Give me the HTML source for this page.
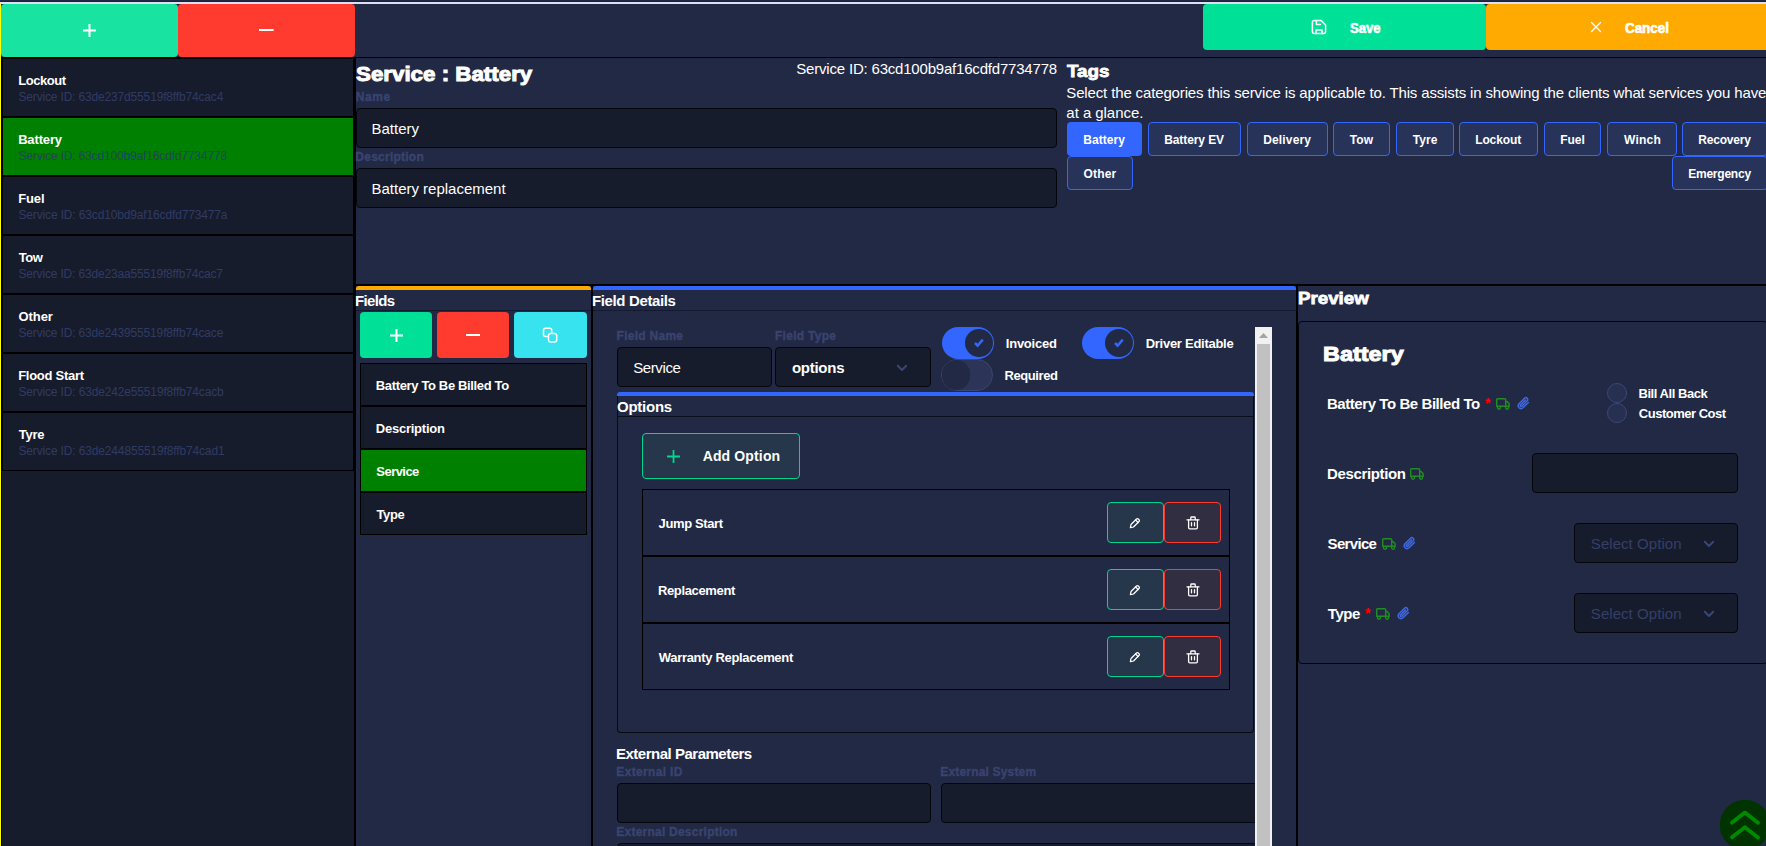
<!DOCTYPE html>
<html lang="en"><head><meta charset="utf-8"><title>Service Editor</title>
<style>
html,body{margin:0;padding:0;}
html{width:1766px;height:846px;overflow:hidden;background:#222944;}
body{width:1766px;height:846px;overflow:hidden;background:#222944;position:relative;font-family:"Liberation Sans", sans-serif;}
#app{position:absolute;left:0;top:0;width:1766px;height:846px;overflow:hidden;contain:paint;}
.b{position:absolute;box-sizing:border-box;display:block;}
.t{position:absolute;white-space:pre;line-height:1;}
</style></head><body><div id="app">
<div class="b" style="left:0px;top:0px;width:1766px;height:1px;background:#222944;"></div>
<div class="b" style="left:0px;top:1px;width:1766px;height:1px;background:#1a213e;"></div>
<div class="b" style="left:0px;top:2px;width:1766px;height:1px;background:#dfe1f0;"></div>
<div class="b" style="left:0px;top:3px;width:1766px;height:1px;background:#ffff00;"></div>
<div class="b" style="left:0px;top:4px;width:1px;height:842px;background:#ffff00;"></div>
<div class="b" style="left:1px;top:4px;width:177px;height:53px;background:#19e3a0;border-radius:4px;"></div>
<div class="b" style="left:178px;top:4px;width:177px;height:53px;background:#ff3b30;border-radius:4px;"></div>
<div class="b" style="left:1203px;top:4px;width:283px;height:46px;background:#00e096;border-radius:4px;"></div>
<div class="b" style="left:1486px;top:4px;width:290px;height:46px;background:#ffaa00;border-radius:4px;"></div>
<div class="b" style="left:1px;top:57px;width:1765px;height:1px;background:#000;"></div>
<div class="b" style="left:1px;top:57px;width:355px;height:789px;background:#000;"></div>
<div class="b" style="left:2px;top:58px;width:352px;height:788px;background:#171c2c;"></div>
<div class="b" style="left:2px;top:58px;width:352px;height:59px;background:#000;"></div>
<div class="b" style="left:3px;top:59px;width:350px;height:57px;background:#171c2c;"></div>
<div class="b" style="left:2px;top:117px;width:352px;height:59px;background:#000;"></div>
<div class="b" style="left:3px;top:118px;width:350px;height:57px;background:#008000;"></div>
<div class="b" style="left:2px;top:176px;width:352px;height:59px;background:#000;"></div>
<div class="b" style="left:3px;top:177px;width:350px;height:57px;background:#171c2c;"></div>
<div class="b" style="left:2px;top:235px;width:352px;height:59px;background:#000;"></div>
<div class="b" style="left:3px;top:236px;width:350px;height:57px;background:#171c2c;"></div>
<div class="b" style="left:2px;top:294px;width:352px;height:59px;background:#000;"></div>
<div class="b" style="left:3px;top:295px;width:350px;height:57px;background:#171c2c;"></div>
<div class="b" style="left:2px;top:353px;width:352px;height:59px;background:#000;"></div>
<div class="b" style="left:3px;top:354px;width:350px;height:57px;background:#171c2c;"></div>
<div class="b" style="left:2px;top:412px;width:352px;height:59px;background:#000;"></div>
<div class="b" style="left:3px;top:413px;width:350px;height:57px;background:#171c2c;"></div>
<div class="b" style="left:356px;top:108px;width:701px;height:40px;background:#171c2c;border:1px solid #05060c;border-radius:4px;"></div>
<div class="b" style="left:356px;top:168px;width:701px;height:40px;background:#171c2c;border:1px solid #05060c;border-radius:4px;"></div>
<div class="b" style="left:1067px;top:122px;width:75px;height:34px;background:#3366ff;border-radius:4px;"></div>
<div class="b" style="left:1148px;top:122px;width:93px;height:34px;background:#28335a;border:1px solid #3366ff;border-radius:4px;"></div>
<div class="b" style="left:1247px;top:122px;width:81px;height:34px;background:#28335a;border:1px solid #3366ff;border-radius:4px;"></div>
<div class="b" style="left:1333px;top:122px;width:57px;height:34px;background:#28335a;border:1px solid #3366ff;border-radius:4px;"></div>
<div class="b" style="left:1396px;top:122px;width:58px;height:34px;background:#28335a;border:1px solid #3366ff;border-radius:4px;"></div>
<div class="b" style="left:1459px;top:122px;width:79px;height:34px;background:#28335a;border:1px solid #3366ff;border-radius:4px;"></div>
<div class="b" style="left:1544px;top:122px;width:57px;height:34px;background:#28335a;border:1px solid #3366ff;border-radius:4px;"></div>
<div class="b" style="left:1607px;top:122px;width:70px;height:34px;background:#28335a;border:1px solid #3366ff;border-radius:4px;"></div>
<div class="b" style="left:1682px;top:122px;width:86px;height:34px;background:#28335a;border:1px solid #3366ff;border-radius:4px;"></div>
<div class="b" style="left:1067px;top:156px;width:66px;height:34px;background:#28335a;border:1px solid #3366ff;border-radius:4px;"></div>
<div class="b" style="left:1672px;top:156px;width:96px;height:34px;background:#28335a;border:1px solid #3366ff;border-radius:4px;"></div>
<div class="b" style="left:356px;top:284px;width:1410px;height:2px;background:#000;"></div>
<div class="b" style="left:356px;top:286px;width:235px;height:4px;background:#ffaa00;border-radius:3px 3px 0 0;"></div>
<div class="b" style="left:356px;top:310px;width:235px;height:1px;background:#151a30;"></div>
<div class="b" style="left:591px;top:286px;width:2px;height:560px;background:#000;"></div>
<div class="b" style="left:360px;top:312px;width:72px;height:46px;background:#00e096;border-radius:4px;"></div>
<div class="b" style="left:437px;top:312px;width:72px;height:46px;background:#ff3b30;border-radius:4px;"></div>
<div class="b" style="left:514px;top:312px;width:73px;height:46px;background:#36e3ee;border-radius:4px;"></div>
<div class="b" style="left:360px;top:363px;width:227px;height:43px;background:#000;"></div>
<div class="b" style="left:361px;top:364px;width:225px;height:41px;background:#171c2c;"></div>
<div class="b" style="left:360px;top:406px;width:227px;height:43px;background:#000;"></div>
<div class="b" style="left:361px;top:407px;width:225px;height:41px;background:#171c2c;"></div>
<div class="b" style="left:360px;top:449px;width:227px;height:43px;background:#000;"></div>
<div class="b" style="left:361px;top:450px;width:225px;height:41px;background:#008000;"></div>
<div class="b" style="left:360px;top:492px;width:227px;height:43px;background:#000;"></div>
<div class="b" style="left:361px;top:493px;width:225px;height:41px;background:#171c2c;"></div>
<div class="b" style="left:593px;top:286px;width:703px;height:4px;background:#3366ff;border-radius:3px 3px 0 0;"></div>
<div class="b" style="left:593px;top:310px;width:703px;height:1px;background:#151a30;"></div>
<div class="b" style="left:1296px;top:286px;width:2px;height:560px;background:#000;"></div>
<div class="b" style="left:617px;top:347px;width:155px;height:40px;background:#171c2c;border:1px solid #05060c;border-radius:4px;"></div>
<div class="b" style="left:775px;top:347px;width:156px;height:40px;background:#171c2c;border:1px solid #05060c;border-radius:4px;"></div>
<svg class="b" style="left:896.0px;top:364.0px" width="12" height="8" viewBox="-6 -4 12 8"><path d="M-4.2 -2.2L0 2L4.2 -2.2" fill="none" stroke="#3a4676" stroke-width="2" stroke-linecap="round" stroke-linejoin="round"/></svg>
<div class="b" style="left:942px;top:327px;width:52px;height:32px;background:#3366ff;border-radius:16px;"></div>
<div class="b" style="left:965px;top:329px;width:28px;height:28px;background:#222944;border-radius:14px;"></div>
<svg class="b" style="left:973.0px;top:337.0px" width="12" height="11" viewBox="0 0 12 11"><path d="M2 6L4.6 8.6L9.8 2.6" fill="none" stroke="#3366ff" stroke-width="2.5" stroke-linejoin="miter"/></svg>
<div class="b" style="left:1082px;top:327px;width:52px;height:32px;background:#3366ff;border-radius:16px;"></div>
<div class="b" style="left:1105px;top:329px;width:28px;height:28px;background:#222944;border-radius:14px;"></div>
<svg class="b" style="left:1113.0px;top:337.0px" width="12" height="11" viewBox="0 0 12 11"><path d="M2 6L4.6 8.6L9.8 2.6" fill="none" stroke="#3366ff" stroke-width="2.5" stroke-linejoin="miter"/></svg>
<div class="b" style="left:941px;top:359px;width:52px;height:32px;background:#2c3557;border:1px solid #3a4570;border-radius:16px;"></div>
<div class="b" style="left:942px;top:360px;width:28px;height:30px;background:#222944;border-radius:15px;"></div>
<div class="b" style="left:617px;top:392px;width:637px;height:341px;border:1px solid #070914;border-top:none;border-radius:4px;"></div>
<div class="b" style="left:617px;top:392px;width:637px;height:4px;background:#3366ff;border-radius:3px 3px 0 0;"></div>
<div class="b" style="left:618px;top:416px;width:635px;height:1px;background:#0b0e1c;"></div>
<div class="b" style="left:642px;top:433px;width:158px;height:46px;background:#26374b;border:1px solid #00d68f;border-radius:4px;"></div>
<svg class="b" style="left:665.6px;top:448.5px" width="15" height="15" viewBox="-7.5 -7.5 15 15"><path d="M-6.5 0H6.5M0 -6.5V6.5" stroke="#00d68f" stroke-width="1.8"/></svg>
<div class="b" style="left:642px;top:489px;width:588px;height:67px;border:1px solid #000;"></div>
<div class="b" style="left:1107px;top:502px;width:57px;height:41px;background:#26374b;border:1px solid #00d68f;border-radius:4px;"></div>
<div class="b" style="left:1164px;top:502px;width:57px;height:41px;background:#322e42;border:1px solid #ff3b30;border-radius:4px;"></div>
<svg class="b" style="left:1128.3px;top:515.6px" width="14" height="14" viewBox="-7 -7 14 14"><g fill="none" stroke="#fff" stroke-width="1.25" stroke-linejoin="round" stroke-linecap="round"><path d="M-4.6 4.6L-4 1.5L1.5 -4Q2.4 -4.9 3.3 -4L4 -3.3Q4.9 -2.4 4 -1.5L-1.5 4Z"/><path d="M0.5 -3.1L3.1 -0.5"/></g></svg>
<svg class="b" style="left:1184.5px;top:514.6px" width="16" height="16" viewBox="-8 -8 16 16"><g fill="none" stroke="#fff" stroke-width="1.3" stroke-linejoin="round" stroke-linecap="round"><path d="M-6 -3.2H6"/><path d="M-2.2 -3.2V-5.2Q-2.2 -6 -1.4 -6H1.4Q2.2 -6 2.2 -5.2V-3.2"/><path d="M-4.4 -3.2V4.6Q-4.4 5.8 -3.2 5.8H3.2Q4.4 5.8 4.4 4.6V-3.2"/><path d="M-1.5 -0.4V2.8M1.5 -0.4V2.8"/></g></svg>
<div class="b" style="left:642px;top:556px;width:588px;height:67px;border:1px solid #000;"></div>
<div class="b" style="left:1107px;top:569px;width:57px;height:41px;background:#26374b;border:1px solid #00d68f;border-radius:4px;"></div>
<div class="b" style="left:1164px;top:569px;width:57px;height:41px;background:#322e42;border:1px solid #ff3b30;border-radius:4px;"></div>
<svg class="b" style="left:1128.3px;top:582.6px" width="14" height="14" viewBox="-7 -7 14 14"><g fill="none" stroke="#fff" stroke-width="1.25" stroke-linejoin="round" stroke-linecap="round"><path d="M-4.6 4.6L-4 1.5L1.5 -4Q2.4 -4.9 3.3 -4L4 -3.3Q4.9 -2.4 4 -1.5L-1.5 4Z"/><path d="M0.5 -3.1L3.1 -0.5"/></g></svg>
<svg class="b" style="left:1184.5px;top:581.6px" width="16" height="16" viewBox="-8 -8 16 16"><g fill="none" stroke="#fff" stroke-width="1.3" stroke-linejoin="round" stroke-linecap="round"><path d="M-6 -3.2H6"/><path d="M-2.2 -3.2V-5.2Q-2.2 -6 -1.4 -6H1.4Q2.2 -6 2.2 -5.2V-3.2"/><path d="M-4.4 -3.2V4.6Q-4.4 5.8 -3.2 5.8H3.2Q4.4 5.8 4.4 4.6V-3.2"/><path d="M-1.5 -0.4V2.8M1.5 -0.4V2.8"/></g></svg>
<div class="b" style="left:642px;top:623px;width:588px;height:67px;border:1px solid #000;"></div>
<div class="b" style="left:1107px;top:636px;width:57px;height:41px;background:#26374b;border:1px solid #00d68f;border-radius:4px;"></div>
<div class="b" style="left:1164px;top:636px;width:57px;height:41px;background:#322e42;border:1px solid #ff3b30;border-radius:4px;"></div>
<svg class="b" style="left:1128.3px;top:649.6px" width="14" height="14" viewBox="-7 -7 14 14"><g fill="none" stroke="#fff" stroke-width="1.25" stroke-linejoin="round" stroke-linecap="round"><path d="M-4.6 4.6L-4 1.5L1.5 -4Q2.4 -4.9 3.3 -4L4 -3.3Q4.9 -2.4 4 -1.5L-1.5 4Z"/><path d="M0.5 -3.1L3.1 -0.5"/></g></svg>
<svg class="b" style="left:1184.5px;top:648.6px" width="16" height="16" viewBox="-8 -8 16 16"><g fill="none" stroke="#fff" stroke-width="1.3" stroke-linejoin="round" stroke-linecap="round"><path d="M-6 -3.2H6"/><path d="M-2.2 -3.2V-5.2Q-2.2 -6 -1.4 -6H1.4Q2.2 -6 2.2 -5.2V-3.2"/><path d="M-4.4 -3.2V4.6Q-4.4 5.8 -3.2 5.8H3.2Q4.4 5.8 4.4 4.6V-3.2"/><path d="M-1.5 -0.4V2.8M1.5 -0.4V2.8"/></g></svg>
<div class="b" style="left:617px;top:783px;width:314px;height:40px;background:#171c2c;border:1px solid #05060c;border-radius:4px;"></div>
<div class="b" style="left:941px;top:783px;width:317px;height:40px;background:#171c2c;border:1px solid #05060c;border-radius:4px;"></div>
<div class="b" style="left:617px;top:843px;width:641px;height:40px;background:#171c2c;border:1px solid #05060c;border-radius:4px;"></div>
<div class="b" style="left:1255px;top:327px;width:17px;height:519px;background:#f1f1f1;"></div>
<div class="b" style="left:1257px;top:344px;width:13px;height:502px;background:#c1c1c1;"></div>
<svg class="b" style="left:1259px;top:333px" width="9" height="5" viewBox="0 0 9 5"><path d="M0 5L4.5 0L9 5Z" fill="#a3a3a3"/></svg>
<div class="b" style="left:1298px;top:321px;width:470px;height:343px;border:1px solid #03040a;border-radius:4px;"></div>
<svg class="b" style="left:1496.0px;top:398.0px" width="15" height="13" viewBox="0 0 15 13"><g fill="none" stroke="#228b22" stroke-width="1.45" stroke-linejoin="round" stroke-linecap="round"><path d="M1.7 0.8H8.7Q9.7 0.8 9.7 1.8V8.2H0.7V1.8Q0.7 0.8 1.7 0.8Z"/><path d="M9.7 3.4H10.7L13.1 5.5V8.2H9.7"/><path d="M1.5 8.4V9.6Q1.5 11.2 3 11.2Q4.5 11.2 4.5 9.6V8.4"/><path d="M9.6 8.4V9.6Q9.6 11.2 11.1 11.2Q12.6 11.2 12.6 9.6V8.4"/></g></svg>
<svg class="b" style="left:1515.6px;top:396.0px" width="14" height="14" viewBox="0 0 14 14"><g fill="none" stroke="#4169e1" stroke-width="1.45" stroke-linecap="round" stroke-linejoin="round"><path d="M12.4 6.4L7 11.8Q5 13.6 3 11.8Q1.2 9.8 3 7.8L8.6 2.2Q9.9 1 11.2 2.2Q12.4 3.5 11.2 4.8L5.8 10.2Q5.1 10.8 4.5 10.2Q3.9 9.5 4.5 8.9L9.4 4"/></g></svg>
<div class="b" style="left:1607px;top:383px;width:20px;height:20px;background:#283052;border:1px solid #3a4878;border-radius:10px;"></div>
<div class="b" style="left:1607px;top:403px;width:20px;height:20px;background:#283052;border:1px solid #3a4878;border-radius:10px;"></div>
<svg class="b" style="left:1410.3px;top:468.0px" width="15" height="13" viewBox="0 0 15 13"><g fill="none" stroke="#228b22" stroke-width="1.45" stroke-linejoin="round" stroke-linecap="round"><path d="M1.7 0.8H8.7Q9.7 0.8 9.7 1.8V8.2H0.7V1.8Q0.7 0.8 1.7 0.8Z"/><path d="M9.7 3.4H10.7L13.1 5.5V8.2H9.7"/><path d="M1.5 8.4V9.6Q1.5 11.2 3 11.2Q4.5 11.2 4.5 9.6V8.4"/><path d="M9.6 8.4V9.6Q9.6 11.2 11.1 11.2Q12.6 11.2 12.6 9.6V8.4"/></g></svg>
<div class="b" style="left:1532px;top:453px;width:206px;height:40px;background:#171c2c;border:1px solid #05060c;border-radius:4px;"></div>
<svg class="b" style="left:1381.8px;top:538.0px" width="15" height="13" viewBox="0 0 15 13"><g fill="none" stroke="#228b22" stroke-width="1.45" stroke-linejoin="round" stroke-linecap="round"><path d="M1.7 0.8H8.7Q9.7 0.8 9.7 1.8V8.2H0.7V1.8Q0.7 0.8 1.7 0.8Z"/><path d="M9.7 3.4H10.7L13.1 5.5V8.2H9.7"/><path d="M1.5 8.4V9.6Q1.5 11.2 3 11.2Q4.5 11.2 4.5 9.6V8.4"/><path d="M9.6 8.4V9.6Q9.6 11.2 11.1 11.2Q12.6 11.2 12.6 9.6V8.4"/></g></svg>
<svg class="b" style="left:1401.6px;top:536.0px" width="14" height="14" viewBox="0 0 14 14"><g fill="none" stroke="#4169e1" stroke-width="1.45" stroke-linecap="round" stroke-linejoin="round"><path d="M12.4 6.4L7 11.8Q5 13.6 3 11.8Q1.2 9.8 3 7.8L8.6 2.2Q9.9 1 11.2 2.2Q12.4 3.5 11.2 4.8L5.8 10.2Q5.1 10.8 4.5 10.2Q3.9 9.5 4.5 8.9L9.4 4"/></g></svg>
<div class="b" style="left:1574px;top:523px;width:164px;height:40px;background:#171c2c;border:1px solid #05060c;border-radius:4px;"></div>
<svg class="b" style="left:1703.0px;top:539.5px" width="12" height="8" viewBox="-6 -4 12 8"><path d="M-4.2 -2.2L0 2L4.2 -2.2" fill="none" stroke="#3a4676" stroke-width="2" stroke-linecap="round" stroke-linejoin="round"/></svg>
<svg class="b" style="left:1376.2px;top:608.0px" width="15" height="13" viewBox="0 0 15 13"><g fill="none" stroke="#228b22" stroke-width="1.45" stroke-linejoin="round" stroke-linecap="round"><path d="M1.7 0.8H8.7Q9.7 0.8 9.7 1.8V8.2H0.7V1.8Q0.7 0.8 1.7 0.8Z"/><path d="M9.7 3.4H10.7L13.1 5.5V8.2H9.7"/><path d="M1.5 8.4V9.6Q1.5 11.2 3 11.2Q4.5 11.2 4.5 9.6V8.4"/><path d="M9.6 8.4V9.6Q9.6 11.2 11.1 11.2Q12.6 11.2 12.6 9.6V8.4"/></g></svg>
<svg class="b" style="left:1395.6px;top:606.0px" width="14" height="14" viewBox="0 0 14 14"><g fill="none" stroke="#4169e1" stroke-width="1.45" stroke-linecap="round" stroke-linejoin="round"><path d="M12.4 6.4L7 11.8Q5 13.6 3 11.8Q1.2 9.8 3 7.8L8.6 2.2Q9.9 1 11.2 2.2Q12.4 3.5 11.2 4.8L5.8 10.2Q5.1 10.8 4.5 10.2Q3.9 9.5 4.5 8.9L9.4 4"/></g></svg>
<div class="b" style="left:1574px;top:593px;width:164px;height:40px;background:#171c2c;border:1px solid #05060c;border-radius:4px;"></div>
<svg class="b" style="left:1703.0px;top:609.5px" width="12" height="8" viewBox="-6 -4 12 8"><path d="M-4.2 -2.2L0 2L4.2 -2.2" fill="none" stroke="#3a4676" stroke-width="2" stroke-linecap="round" stroke-linejoin="round"/></svg>
<svg class="b" style="left:81.5px;top:22.5px" width="15" height="15" viewBox="-7.5 -7.5 15 15"><path d="M-6.5 0H6.5M0 -6.5V6.5" stroke="#fff" stroke-width="2"/></svg>
<svg class="b" style="left:257.9px;top:28.0px" width="16.6" height="4" viewBox="-8.3 -2 16.6 4"><path d="M-7.3 0H7.3" stroke="#fff" stroke-width="2"/></svg>
<svg class="b" style="left:388.5px;top:327.5px" width="15" height="15" viewBox="-7.5 -7.5 15 15"><path d="M-6.5 0H6.5M0 -6.5V6.5" stroke="#fff" stroke-width="2"/></svg>
<svg class="b" style="left:465.0px;top:333.0px" width="16" height="4" viewBox="-8.0 -2 16 4"><path d="M-7.0 0H7.0" stroke="#fff" stroke-width="2"/></svg>
<svg class="b" style="left:541.0px;top:326.0px" width="18" height="18" viewBox="-9 -9 18 18"><g fill="none" stroke="#fff" stroke-width="1.5" stroke-linejoin="round" stroke-linecap="round"><rect x="-1.5" y="-1.5" width="8.2" height="8.4" rx="2.2"/><path d="M-2.4 1.5H-4.5Q-6.5 1.5 -6.5 -0.5V-4.7Q-6.5 -6.7 -4.5 -6.7H-0.3Q1.7 -6.7 1.7 -4.7V-2.5"/></g></svg>
<svg class="b" style="left:1309.8px;top:17.8px" width="18" height="18" viewBox="-9 -9 18 18"><g fill="none" stroke="#fff" stroke-width="1.5" stroke-linejoin="round" stroke-linecap="round"><path d="M-6.6 -4.6Q-6.6 -6.6 -4.6 -6.6H2L6.6 -2V4.6Q6.6 6.6 4.6 6.6H-4.6Q-6.6 6.6 -6.6 4.6Z"/><path d="M-2.6 -6.4V-2.4H1.4"/><path d="M-3 6.4V3H3V6.4"/></g></svg>
<svg class="b" style="left:1589.0px;top:20.1px" width="14" height="14" viewBox="-7 -7 14 14"><path d="M-4.5 -4.5L4.5 4.5M4.5 -4.5L-4.5 4.5" stroke="#fff" stroke-width="1.4" stroke-linecap="round"/></svg>
<svg class="b" style="left:1720px;top:800px" width="50" height="50" viewBox="0 0 50 50"><circle cx="25" cy="25" r="25.2" fill="#003300"/><path d="M12 22.6L24.9 12.6L38 22.8M12 37.2L24.9 27.2L38 37.4" fill="none" stroke="#008a00" stroke-width="3.8" stroke-linecap="round" stroke-linejoin="round"/></svg>
<span class="t" id="t0" style="left:18.13px;top:74px;font-size:13px;font-weight:700;color:#fff;letter-spacing:-0.422px;">Lockout</span>
<span class="t" id="t1" style="left:18.46px;top:91px;font-size:12px;font-weight:400;color:#303b64;letter-spacing:-0.163px;">Service ID: 63de237d55519f8ffb74cac4</span>
<span class="t" id="t2" style="left:18.13px;top:133px;font-size:13px;font-weight:700;color:#fff;letter-spacing:-0.143px;">Battery</span>
<span class="t" id="t3" style="left:18.46px;top:150px;font-size:12px;font-weight:400;color:#1f4460;letter-spacing:-0.160px;">Service ID: 63cd100b9af16cdfd7734778</span>
<span class="t" id="t4" style="left:18.13px;top:192px;font-size:13px;font-weight:700;color:#fff;letter-spacing:-0.081px;">Fuel</span>
<span class="t" id="t5" style="left:18.46px;top:209px;font-size:12px;font-weight:400;color:#303b64;letter-spacing:-0.146px;">Service ID: 63cd10bd9af16cdfd773477a</span>
<span class="t" id="t6" style="left:18.85px;top:251px;font-size:13px;font-weight:700;color:#fff;letter-spacing:-0.505px;">Tow</span>
<span class="t" id="t7" style="left:18.46px;top:268px;font-size:12px;font-weight:400;color:#303b64;letter-spacing:-0.173px;">Service ID: 63de23aa55519f8ffb74cac7</span>
<span class="t" id="t8" style="left:18.47px;top:310px;font-size:13px;font-weight:700;color:#fff;letter-spacing:-0.060px;">Other</span>
<span class="t" id="t9" style="left:18.46px;top:327px;font-size:12px;font-weight:400;color:#303b64;letter-spacing:-0.164px;">Service ID: 63de243955519f8ffb74cace</span>
<span class="t" id="t10" style="left:18.13px;top:369px;font-size:13px;font-weight:700;color:#fff;letter-spacing:-0.268px;">Flood Start</span>
<span class="t" id="t11" style="left:18.46px;top:386px;font-size:12px;font-weight:400;color:#303b64;letter-spacing:-0.153px;">Service ID: 63de242e55519f8ffb74cacb</span>
<span class="t" id="t12" style="left:18.85px;top:428px;font-size:13px;font-weight:700;color:#fff;letter-spacing:-0.270px;">Tyre</span>
<span class="t" id="t13" style="left:18.46px;top:445px;font-size:12px;font-weight:400;color:#303b64;letter-spacing:-0.147px;">Service ID: 63de244855519f8ffb74cad1</span>
<span class="t" id="t14" style="left:355.86px;top:63px;font-size:21px;font-weight:700;color:#fff;transform:scaleX(1.0633);transform-origin:0 0;-webkit-text-stroke:1.0px #fff;">Service : Battery</span>
<span class="t" id="t15" style="left:796.32px;top:61px;font-size:15px;font-weight:400;color:#fff;letter-spacing:-0.196px;">Service ID: 63cd100b9af16cdfd7734778</span>
<span class="t" id="t16" style="left:355.67px;top:91px;font-size:12px;font-weight:700;color:#394470;letter-spacing:0.625px;-webkit-text-stroke:0.35px #394470;">Name</span>
<span class="t" id="t17" style="left:371.47px;top:121px;font-size:15px;font-weight:400;color:#fff;letter-spacing:0.005px;">Battery</span>
<span class="t" id="t18" style="left:355.37px;top:151px;font-size:12px;font-weight:700;color:#394470;letter-spacing:0.238px;-webkit-text-stroke:0.35px #394470;">Description</span>
<span class="t" id="t19" style="left:371.47px;top:181px;font-size:15px;font-weight:400;color:#fff;letter-spacing:-0.005px;">Battery replacement</span>
<span class="t" id="t20" style="left:1066.89px;top:63px;font-size:17px;font-weight:700;color:#fff;transform:scaleX(1.1057);transform-origin:0 0;-webkit-text-stroke:0.8px #fff;">Tags</span>
<span class="t" id="t21" style="left:1066.32px;top:85px;font-size:15px;font-weight:400;color:#fff;letter-spacing:-0.144px;">Select the categories this service is applicable to. This assists in showing the clients what services you have</span>
<span class="t" id="t22" style="left:1066.36px;top:105px;font-size:15px;font-weight:400;color:#fff;letter-spacing:-0.051px;">at a glance.</span>
<span class="t" id="t23" style="left:1083.20px;top:134px;font-size:12px;font-weight:700;color:#fff;letter-spacing:0.085px;">Battery</span>
<span class="t" id="t24" style="left:1164.20px;top:134px;font-size:12px;font-weight:700;color:#fff;letter-spacing:-0.091px;">Battery EV</span>
<span class="t" id="t25" style="left:1263.20px;top:134px;font-size:12px;font-weight:700;color:#fff;letter-spacing:0.166px;">Delivery</span>
<span class="t" id="t26" style="left:1349.87px;top:134px;font-size:12px;font-weight:700;color:#fff;letter-spacing:0.001px;">Tow</span>
<span class="t" id="t27" style="left:1412.87px;top:134px;font-size:12px;font-weight:700;color:#fff;letter-spacing:0.025px;">Tyre</span>
<span class="t" id="t28" style="left:1475.20px;top:134px;font-size:12px;font-weight:700;color:#fff;letter-spacing:-0.120px;">Lockout</span>
<span class="t" id="t29" style="left:1560.20px;top:134px;font-size:12px;font-weight:700;color:#fff;letter-spacing:-0.007px;">Fuel</span>
<span class="t" id="t30" style="left:1623.99px;top:134px;font-size:12px;font-weight:700;color:#fff;letter-spacing:0.216px;">Winch</span>
<span class="t" id="t31" style="left:1698.20px;top:134px;font-size:12px;font-weight:700;color:#fff;letter-spacing:-0.169px;">Recovery</span>
<span class="t" id="t32" style="left:1083.51px;top:168px;font-size:12px;font-weight:700;color:#fff;letter-spacing:0.165px;">Other</span>
<span class="t" id="t33" style="left:1688.20px;top:168px;font-size:12px;font-weight:700;color:#fff;letter-spacing:-0.229px;">Emergency</span>
<span class="t" id="t34" style="left:355.00px;top:293px;font-size:15px;font-weight:700;color:#fff;letter-spacing:-0.668px;">Fields</span>
<span class="t" id="t35" style="left:375.83px;top:379px;font-size:13px;font-weight:700;color:#fff;letter-spacing:-0.355px;">Battery To Be Billed To</span>
<span class="t" id="t36" style="left:375.83px;top:422px;font-size:13px;font-weight:700;color:#fff;letter-spacing:-0.244px;">Description</span>
<span class="t" id="t37" style="left:376.33px;top:465px;font-size:13px;font-weight:700;color:#fff;letter-spacing:-0.541px;">Service</span>
<span class="t" id="t38" style="left:376.55px;top:508px;font-size:13px;font-weight:700;color:#fff;letter-spacing:-0.400px;">Type</span>
<span class="t" id="t39" style="left:592.00px;top:293px;font-size:15px;font-weight:700;color:#fff;letter-spacing:-0.370px;">Field Details</span>
<span class="t" id="t40" style="left:616.57px;top:330px;font-size:12px;font-weight:700;color:#394470;letter-spacing:0.270px;-webkit-text-stroke:0.35px #394470;">Field Name</span>
<span class="t" id="t41" style="left:774.97px;top:330px;font-size:12px;font-weight:700;color:#394470;letter-spacing:0.279px;-webkit-text-stroke:0.35px #394470;">Field Type</span>
<span class="t" id="t42" style="left:633.22px;top:360px;font-size:15px;font-weight:400;color:#fff;letter-spacing:-0.397px;">Service</span>
<span class="t" id="t43" style="left:791.91px;top:360px;font-size:15px;font-weight:700;color:#fff;letter-spacing:-0.259px;">options</span>
<span class="t" id="t44" style="left:1005.83px;top:337px;font-size:13px;font-weight:700;color:#fff;letter-spacing:-0.246px;">Invoiced</span>
<span class="t" id="t45" style="left:1145.73px;top:337px;font-size:13px;font-weight:700;color:#fff;letter-spacing:-0.275px;">Driver Editable</span>
<span class="t" id="t46" style="left:1004.43px;top:369px;font-size:13px;font-weight:700;color:#fff;letter-spacing:-0.388px;">Required</span>
<span class="t" id="t47" style="left:616.98px;top:399px;font-size:15px;font-weight:700;color:#fff;letter-spacing:-0.240px;">Options</span>
<span class="t" id="t48" style="left:702.65px;top:449px;font-size:14px;font-weight:700;color:#fff;letter-spacing:0.146px;">Add Option</span>
<span class="t" id="t49" style="left:658.60px;top:517px;font-size:13px;font-weight:700;color:#fff;letter-spacing:-0.383px;">Jump Start</span>
<span class="t" id="t50" style="left:657.93px;top:584px;font-size:13px;font-weight:700;color:#fff;letter-spacing:-0.349px;">Replacement</span>
<span class="t" id="t51" style="left:658.79px;top:651px;font-size:13px;font-weight:700;color:#fff;letter-spacing:-0.312px;">Warranty Replacement</span>
<span class="t" id="t52" style="left:616.00px;top:746px;font-size:15px;font-weight:700;color:#fff;letter-spacing:-0.493px;">External Parameters</span>
<span class="t" id="t53" style="left:616.37px;top:766px;font-size:12px;font-weight:700;color:#394470;letter-spacing:0.335px;-webkit-text-stroke:0.35px #394470;">External ID</span>
<span class="t" id="t54" style="left:940.37px;top:766px;font-size:12px;font-weight:700;color:#394470;letter-spacing:0.165px;-webkit-text-stroke:0.35px #394470;">External System</span>
<span class="t" id="t55" style="left:616.37px;top:826px;font-size:12px;font-weight:700;color:#394470;letter-spacing:0.226px;-webkit-text-stroke:0.35px #394470;">External Description</span>
<span class="t" id="t56" style="left:1297.65px;top:290px;font-size:17px;font-weight:700;color:#fff;transform:scaleX(1.1004);transform-origin:0 0;-webkit-text-stroke:0.8px #fff;">Preview</span>
<span class="t" id="t57" style="left:1322.63px;top:343px;font-size:21px;font-weight:700;color:#fff;transform:scaleX(1.1149);transform-origin:0 0;-webkit-text-stroke:1.0px #fff;">Battery</span>
<span class="t" id="t58" style="left:1326.90px;top:396px;font-size:15px;font-weight:700;color:#fff;letter-spacing:-0.428px;">Battery To Be Billed To</span>
<span class="t" id="t59" style="left:1484.96px;top:396px;font-size:14px;font-weight:700;color:#ff0000;">*</span>
<span class="t" id="t60" style="left:1638.53px;top:387px;font-size:13px;font-weight:700;color:#fff;letter-spacing:-0.450px;">Bill All Back</span>
<span class="t" id="t61" style="left:1638.87px;top:407px;font-size:13px;font-weight:700;color:#fff;letter-spacing:-0.500px;">Customer Cost</span>
<span class="t" id="t62" style="left:1327.00px;top:466px;font-size:15px;font-weight:700;color:#fff;letter-spacing:-0.348px;">Description</span>
<span class="t" id="t63" style="left:1327.57px;top:536px;font-size:15px;font-weight:700;color:#fff;letter-spacing:-0.674px;">Service</span>
<span class="t" id="t64" style="left:1590.82px;top:536px;font-size:15px;font-weight:400;color:#353f68;letter-spacing:0.058px;">Select Option</span>
<span class="t" id="t65" style="left:1327.83px;top:606px;font-size:15px;font-weight:700;color:#fff;letter-spacing:-0.442px;">Type</span>
<span class="t" id="t66" style="left:1364.96px;top:606px;font-size:14px;font-weight:700;color:#ff0000;">*</span>
<span class="t" id="t67" style="left:1590.82px;top:606px;font-size:15px;font-weight:400;color:#353f68;letter-spacing:0.058px;">Select Option</span>
<span class="t" id="t68" style="left:1349.72px;top:21px;font-size:14px;font-weight:700;color:#fff;transform:scaleX(0.9302);transform-origin:0 0;-webkit-text-stroke:0.6px #fff;">Save</span>
<span class="t" id="t69" style="left:1625.35px;top:21px;font-size:14px;font-weight:700;color:#fff;transform:scaleX(0.9559);transform-origin:0 0;-webkit-text-stroke:0.6px #fff;">Cancel</span>
</div></body></html>
